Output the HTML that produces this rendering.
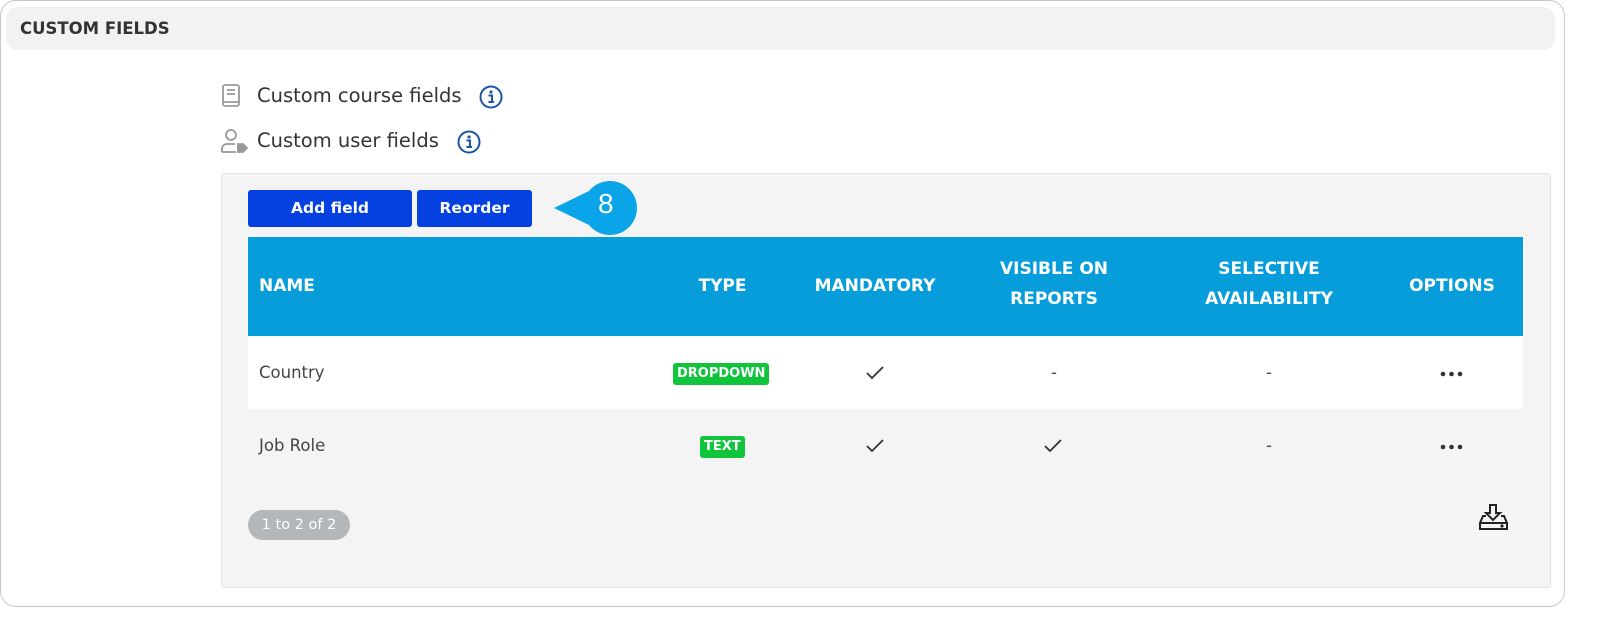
<html><head><style>
body{margin:0;width:1600px;height:621px;background:#fff;font-family:"DejaVu Sans","Liberation Sans",sans-serif;position:relative;overflow:hidden}
.a{position:absolute}
.card{left:0;top:0;width:1565px;height:607px;border:1px solid #c8c8c8;border-radius:16px;box-sizing:border-box}
.hd{left:6px;top:7px;width:1549px;height:43px;background:#f2f2f2;border-radius:12px}
.hd span{position:absolute;left:14px;top:12px;font-weight:bold;font-size:16.5px;color:#333}
.t{font-size:19.5px;color:#333}
.panel{left:221px;top:173px;width:1330px;height:415px;background:#f4f4f4;border:1px solid #e3e3e3;border-radius:3px;box-sizing:border-box}
.btn{background:#0441e0;color:#fff;font-weight:bold;font-size:15.5px;text-align:center;line-height:37px;height:37px;border-radius:3px;top:190px}
.th{top:237px;left:248px;width:1275px;height:99px;background:#079ddb}
.h{color:#fff;font-weight:bold;font-size:17px;text-align:center;line-height:30px}
.c{font-size:16.5px;color:#444}
.tag{background:#10c43c;color:#fff;font-weight:bold;font-size:13px;border-radius:3px;height:22px;line-height:22px;padding:0 4px}
</style></head><body>
<div class="a card"></div>
<div class="a hd"><span>CUSTOM FIELDS</span></div>
<svg class="a" style="left:221px;top:84px" width="20" height="24" viewBox="0 0 20 24" fill="none" stroke="#999" stroke-width="1.8"><rect x="2" y="1" width="16" height="21" rx="2"/><path d="M2 18h16M6 6h8M6 10h8"/></svg>
<div class="a t" style="left:257px;top:84px">Custom course fields</div>
<svg class="a" style="left:479px;top:85px" width="24" height="24" viewBox="0 0 24 24"><circle cx="12" cy="12" r="10.5" fill="none" stroke="#1a56a8" stroke-width="2"/><circle cx="12" cy="7" r="1.6" fill="#1a56a8"/><path d="M9.5 10.5h3.5v6.5h2M9.5 17h5.5" stroke="#1a56a8" stroke-width="2" fill="none"/></svg>
<svg class="a" style="left:220px;top:128px" width="30" height="26" viewBox="0 0 30 26" fill="none" stroke="#999" stroke-width="1.8"><circle cx="11" cy="7" r="5"/><path d="M2 24v-3a5 5 0 0 1 5-5h8"/><path d="M2 24h14" /><path d="M18 16h5l4 4-4 4h-5z" fill="#999"/></svg>
<div class="a t" style="left:257px;top:129px">Custom user fields</div>
<svg class="a" style="left:457px;top:130px" width="24" height="24" viewBox="0 0 24 24"><circle cx="12" cy="12" r="10.5" fill="none" stroke="#1a56a8" stroke-width="2"/><circle cx="12" cy="7" r="1.6" fill="#1a56a8"/><path d="M9.5 10.5h3.5v6.5h2M9.5 17h5.5" stroke="#1a56a8" stroke-width="2" fill="none"/></svg>
<div class="a panel"></div>
<div class="a btn" style="left:248px;width:164px">Add field</div>
<div class="a btn" style="left:417px;width:115px">Reorder</div>
<svg class="a" style="left:554px;top:181px" width="84" height="54" viewBox="0 0 84 54"><path d="M0 27L35 10A27 27 0 1 1 35 44Z" fill="#0aa4e8"/></svg>
<div class="a" style="left:598px;top:188px;color:#fff;font-size:28px;font-family:'Liberation Sans',sans-serif">8</div>
<div class="a th"></div>
<div class="a h" style="left:259px;top:271px">NAME</div>
<div class="a h" style="left:680px;top:271px;width:85px">TYPE</div>
<div class="a h" style="left:785px;top:271px;width:180px">MANDATORY</div>
<div class="a h" style="left:964px;top:254px;width:180px">VISIBLE ON<br>REPORTS</div>
<div class="a h" style="left:1169px;top:254px;width:200px">SELECTIVE<br>AVAILABILITY</div>
<div class="a h" style="left:1392px;top:271px;width:120px">OPTIONS</div>
<div class="a" style="left:248px;top:336px;width:1275px;height:73px;background:#fff"></div>
<div class="a c" style="left:259px;top:363px">Country</div>
<div class="a tag" style="left:673px;top:363px">DROPDOWN</div>
<div class="a c" style="left:259px;top:436px">Job Role</div>
<div class="a tag" style="left:700px;top:436px">TEXT</div>
<svg class="a" style="left:865px;top:365px" width="20" height="16"><path d="M2 8l5 5 11-11" stroke="#333" stroke-width="1.8" fill="none"/></svg>
<svg class="a" style="left:865px;top:438px" width="20" height="16"><path d="M2 8l5 5 11-11" stroke="#333" stroke-width="1.8" fill="none"/></svg>
<svg class="a" style="left:1043px;top:438px" width="20" height="16"><path d="M2 8l5 5 11-11" stroke="#333" stroke-width="1.8" fill="none"/></svg>
<div class="a c" style="left:1051px;top:363px">-</div>
<div class="a c" style="left:1266px;top:363px">-</div>
<div class="a c" style="left:1266px;top:436px">-</div>
<svg class="a" style="left:1440px;top:370px" width="24" height="8"><circle cx="3" cy="4" r="2.3" fill="#333"/><circle cx="11.5" cy="4" r="2.3" fill="#333"/><circle cx="20" cy="4" r="2.3" fill="#333"/></svg>
<svg class="a" style="left:1440px;top:443px" width="24" height="8"><circle cx="3" cy="4" r="2.3" fill="#333"/><circle cx="11.5" cy="4" r="2.3" fill="#333"/><circle cx="20" cy="4" r="2.3" fill="#333"/></svg>
<div class="a" style="left:248px;top:510px;width:102px;height:30px;border-radius:15px;background:#b3b7b9;color:#fff;font-size:14.5px;text-align:center;line-height:30px">1 to 2 of 2</div>
<svg class="a" style="left:1478px;top:503px" width="32" height="30" viewBox="0 0 32 30" fill="none" stroke="#222" stroke-width="2"><path d="M12 2h6v8h4l-7 7-7-7h4z"/><path d="M8 13H5l-3 7v6h27v-6l-3-7h-3"/><path d="M2 20h27"/><circle cx="24" cy="23" r="0.6" fill="#222"/></svg>
</body></html>
